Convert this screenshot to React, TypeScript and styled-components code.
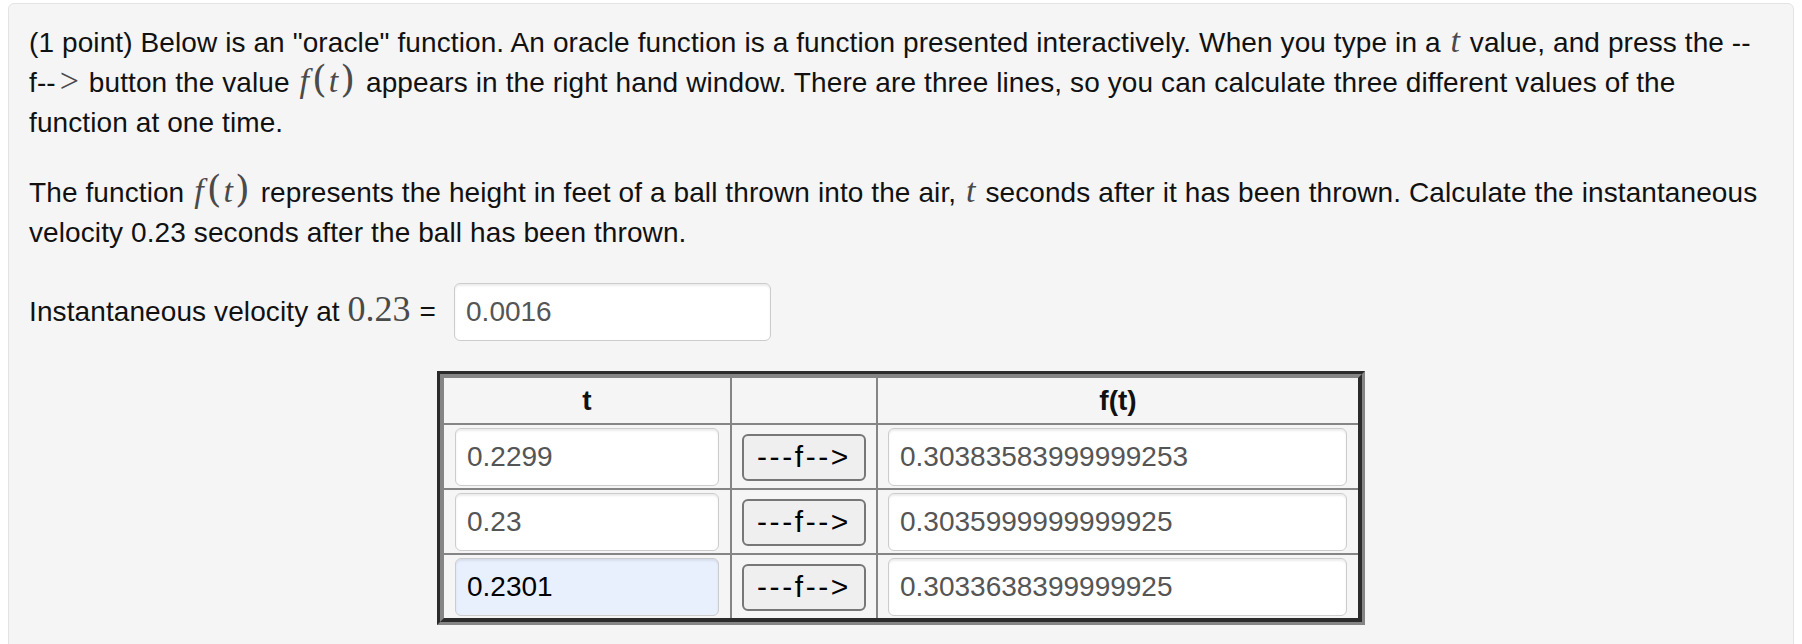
import React from "react";
import styled, { createGlobalStyle } from "styled-components";

const Global = createGlobalStyle`
  html, body { margin: 0; padding: 0; background: #ffffff; }
  body { font-family: "Liberation Sans", Arial, Helvetica, sans-serif; }
`;

const Page = styled.div`
  padding: 3px 8px 0 8px;
`;

const Panel = styled.div`
  background: #f5f5f5;
  border: 1px solid #e3e3e3;
  border-radius: 6px;
  padding: 19px 20px 40px 20px;
  min-height: 660px;
  color: #111;
  font-size: 28px;
  line-height: 40px;
`;

const Para = styled.p`
  margin: 0 0 30px 0;
  letter-spacing: 0.1px;
`;

const Math = styled.span<{ $upright?: boolean; $size?: number }>`
  font-family: "Liberation Serif", "Times New Roman", serif;
  font-style: ${(p) => (p.$upright ? "normal" : "italic")};
  font-size: ${(p) => p.$size ?? 34}px;
  color: #4a4a4a;
  line-height: 0;
  letter-spacing: 0;
`;

const MathGroup = styled.span`
  display: inline-block;
  margin: 0 3px 0 2px;
  line-height: 0;
`;

const Fn = styled(Math)`
  margin-right: 3px;
`;

const Paren = styled(Math)`
  font-family: "DejaVu Serif", "Liberation Serif", serif;
  font-style: normal;
  font-weight: 300;
  font-size: 38px;
`;

const Var = styled(Math)`
  margin: 0 2px;
`;

const Rel = styled(Math)`
  margin: 0 2px 0 4px;
`;

const NoWrap = styled.span`
  white-space: nowrap;
`;

const AnswerRow = styled.div`
  display: flex;
  align-items: center;
  gap: 18px;
  margin: 0 0 30px 0;
  letter-spacing: 0.1px;
`;

const Equals = styled.span`
  margin-left: 9px;
`;

const Field = styled.input<{ $filled?: boolean; $width?: string }>`
  box-sizing: border-box;
  width: ${(p) => p.$width ?? "100%"};
  height: 58px;
  padding: 0 11px;
  border: 1px solid #cccccc;
  border-radius: 6px;
  background: ${(p) => (p.$filled ? "#e8f0fe" : "#ffffff")};
  color: ${(p) => (p.$filled ? "#000000" : "#555555")};
  box-shadow: inset 0 2px 2px rgba(0, 0, 0, 0.075);
  font-family: "Liberation Sans", Arial, Helvetica, sans-serif;
  font-size: 28px;
  outline: none;
  display: block;
`;

const Frame = styled.div`
  width: fit-content;
  margin: 0 auto;
  border-style: solid;
  border-width: 3px;
  border-color: #2b2b2b #858585 #858585 #2b2b2b;
`;

const Table = styled.table`
  border-collapse: separate;
  border-spacing: 0;
  border-style: solid;
  border-width: 4px;
  border-color: #858585 #2b2b2b #2b2b2b #858585;
  background: #f5f5f5;
`;

const HeadCell = styled.th<{ $width: number }>`
  width: ${(p) => p.$width}px;
  box-sizing: border-box;
  height: 45px;
  padding: 0;
  font-weight: bold;
  font-size: 28px;
  text-align: center;
  vertical-align: middle;
  color: #111;
  & + & {
    border-left: 2px solid #858585;
  }
`;

const Cell = styled.td<{ $pad?: string }>`
  padding: ${(p) => p.$pad ?? "3px 11px 2px 11px"};
  height: 63px;
  box-sizing: border-box;
  vertical-align: middle;
  text-align: center;
  border-top: 2px solid #858585;
  & + & {
    border-left: 2px solid #858585;
  }
`;

const ArrowButton = styled.button`
  box-sizing: border-box;
  width: 124px;
  height: 47px;
  padding: 0;
  background: #efefef;
  border: 2px solid #777777;
  border-radius: 6px;
  color: #000;
  font-family: "Liberation Sans", Arial, Helvetica, sans-serif;
  font-size: 30px;
  letter-spacing: 2.6px;
  cursor: pointer;
`;

const FofT = () => (
  <MathGroup>
    <Fn>f</Fn>
    <Paren>(</Paren>
    <Var>t</Var>
    <Paren>)</Paren>
  </MathGroup>
);

const rows = [
  { t: "0.2299", f: "0.30383583999999253", filled: false },
  { t: "0.23", f: "0.3035999999999925", filled: false },
  { t: "0.2301", f: "0.3033638399999925", filled: true },
];

export default function App() {
  return (
    <>
      <Global />
      <Page>
        <Panel>
          <Para>
            (1 point) Below is an "oracle" function. An oracle function is a function presented
            interactively. When you type in a <Var>t</Var> value, and press the --
            <NoWrap>
              f--<Rel $upright>&gt;</Rel>
            </NoWrap>{" "}
            button the value <FofT /> appears in the right hand window. There are three lines, so
            you can calculate three different values of the function at one time.
          </Para>
          <Para>
            The function <FofT /> represents the height in feet of a ball thrown into the air,{" "}
            <Var>t</Var> seconds after it has been thrown. Calculate the instantaneous velocity
            0.23 seconds after the ball has been thrown.
          </Para>
          <AnswerRow>
            <span>
              Instantaneous velocity at <Math $upright $size={36}>0.23</Math>
              <Equals>=</Equals>
            </span>
            <Field $width="317px" defaultValue="0.0016" />
          </AnswerRow>
          <Frame>
            <Table>
              <thead>
                <tr>
                  <HeadCell $width={286}>t</HeadCell>
                  <HeadCell $width={146}></HeadCell>
                  <HeadCell $width={482}>f(t)</HeadCell>
                </tr>
              </thead>
              <tbody>
                {rows.map((r) => (
                  <tr key={r.t}>
                    <Cell>
                      <Field $filled={r.filled} defaultValue={r.t} />
                    </Cell>
                    <Cell $pad="3px 0 2px 0">
                      <ArrowButton>---f--&gt;</ArrowButton>
                    </Cell>
                    <Cell $pad="3px 11px 2px 10px">
                      <Field defaultValue={r.f} />
                    </Cell>
                  </tr>
                ))}
              </tbody>
            </Table>
          </Frame>
        </Panel>
      </Page>
    </>
  );
}
